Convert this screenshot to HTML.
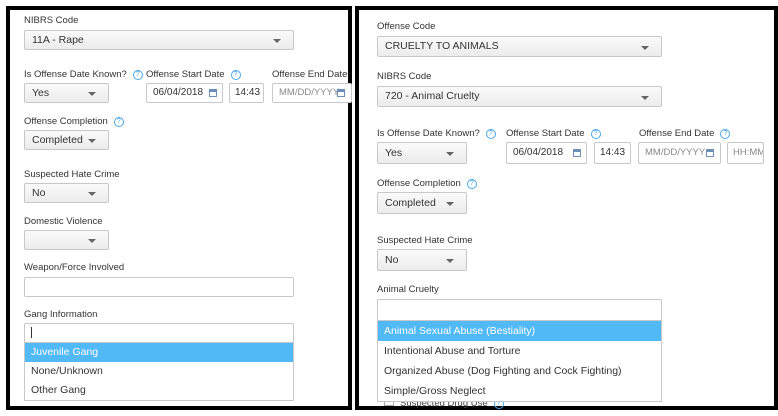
<!DOCTYPE html>
<html><head><style>
*{box-sizing:border-box;margin:0;padding:0}
body{width:778px;height:416px;background:#fff;position:relative;overflow:hidden;font-family:"Liberation Sans",sans-serif;color:#333}
.panel{position:absolute;border:4px solid #000;background:#fff;overflow:hidden}
.a{position:absolute}
.lb{position:absolute;font-size:9.5px;line-height:12px;color:#333;white-space:nowrap}
.sel{position:absolute;border:1px solid #c8c8c8;border-radius:2px;background:linear-gradient(#fafafa,#ececec);font-size:10.5px;line-height:18px;padding-left:7px;color:#333;white-space:nowrap}
.sel:after{content:"";position:absolute;right:12px;top:50%;margin-top:-1px;border-left:4px solid transparent;border-right:4px solid transparent;border-top:4px solid #666}
.inp{position:absolute;border:1px solid #c8c8c8;border-radius:2px;background:#fff;font-size:10px;line-height:18px;padding-left:6px;white-space:nowrap;overflow:hidden}
.cal{position:absolute;width:8px;height:8px;border:1px solid #6b8fb8;border-top:3px solid #6b8fb8;top:5px}
.q{display:inline-block;width:10px;height:10px;border:1px solid #4aa8e8;border-radius:50%;color:#4aa8e8;font-size:7px;line-height:8px;text-align:center;margin-left:6px;vertical-align:top;margin-top:1px}
.dd{position:absolute;border:1px solid #c8c8c8;background:#fff;font-size:10.5px}
.dd div{height:19px;line-height:19px;padding-left:6px;white-space:nowrap}
.dd .h{background:#52b9f7;color:#fff}
</style></head><body>
<div class="panel" style="left:6px;top:6px;width:346px;height:404px"></div>
<div class="panel" style="left:355px;top:6px;width:423px;height:404px"></div>

<!-- left -->
<div class="lb" style="left:24px;top:15px">NIBRS Code</div>
<div class="sel" style="left:24px;top:30px;width:270px;height:20px">11A - Rape</div>
<div class="lb" style="left:24px;top:69px">Is Offense Date Known?<span class="q">?</span></div>
<div class="lb" style="left:146px;top:69px">Offense Start Date<span class="q">?</span></div>
<div class="lb" style="left:272px;top:69px">Offense End Date</div>
<div class="sel" style="left:24px;top:83px;width:85px;height:20px">Yes</div>
<div class="inp" style="left:146px;top:83px;width:77px;height:20px">06/04/2018<span class="cal" style="left:62px"></span></div>
<div class="inp" style="left:229px;top:83px;width:35px;height:20px;padding-left:5px">14:43</div>
<div class="inp" style="left:272px;top:83px;width:80px;height:20px;color:#888;font-size:9.5px">MM/DD/YYYY<span class="cal" style="left:64px"></span></div>
<div class="lb" style="left:24px;top:116px">Offense Completion<span class="q">?</span></div>
<div class="sel" style="left:24px;top:130px;width:85px;height:20px">Completed</div>
<div class="lb" style="left:24px;top:169px">Suspected Hate Crime</div>
<div class="sel" style="left:24px;top:183px;width:85px;height:20px">No</div>
<div class="lb" style="left:24px;top:216px">Domestic Violence</div>
<div class="sel" style="left:24px;top:230px;width:85px;height:20px"></div>
<div class="lb" style="left:24px;top:262px">Weapon/Force Involved</div>
<div class="inp" style="left:24px;top:277px;width:270px;height:20px"></div>
<div class="lb" style="left:24px;top:309px">Gang Information</div>
<div class="inp" style="left:24px;top:323px;width:270px;height:20px"><span style="border-left:1px solid #333;display:inline-block;height:11px;vertical-align:middle"></span></div>
<div class="dd" style="left:24px;top:342px;width:270px;height:59px">
<div class="h">Juvenile Gang</div><div>None/Unknown</div><div>Other Gang</div></div>

<!-- right -->
<div class="lb" style="left:377px;top:21px">Offense Code</div>
<div class="sel" style="left:377px;top:36px;width:285px;height:21px;line-height:19px">CRUELTY TO ANIMALS</div>
<div class="lb" style="left:377px;top:71px">NIBRS Code</div>
<div class="sel" style="left:377px;top:86px;width:285px;height:21px;line-height:19px">720 - Animal Cruelty</div>
<div class="lb" style="left:377px;top:128px">Is Offense Date Known?<span class="q">?</span></div>
<div class="lb" style="left:506px;top:128px">Offense Start Date<span class="q">?</span></div>
<div class="lb" style="left:639px;top:128px">Offense End Date<span class="q">?</span></div>
<div class="sel" style="left:377px;top:142px;width:90px;height:22px;line-height:20px">Yes</div>
<div class="inp" style="left:506px;top:142px;width:81px;height:22px;line-height:20px">06/04/2018<span class="cal" style="left:66px;top:6px"></span></div>
<div class="inp" style="left:594px;top:142px;width:37px;height:22px;line-height:20px;padding-left:5px">14:43</div>
<div class="inp" style="left:638px;top:142px;width:83px;height:22px;line-height:20px;color:#888;font-size:9.5px">MM/DD/YYYY<span class="cal" style="left:67px;top:6px"></span></div>
<div class="inp" style="left:727px;top:142px;width:37px;height:22px;line-height:20px;color:#888;font-size:9.5px;padding-left:5px">HH:MM</div>
<div class="lb" style="left:377px;top:178px">Offense Completion<span class="q">?</span></div>
<div class="sel" style="left:377px;top:192px;width:90px;height:22px;line-height:20px">Completed</div>
<div class="lb" style="left:377px;top:235px">Suspected Hate Crime</div>
<div class="sel" style="left:377px;top:249px;width:90px;height:22px;line-height:20px">No</div>
<div class="lb" style="left:377px;top:284px">Animal Cruelty</div>
<div class="inp" style="left:377px;top:299px;width:285px;height:22px"></div>
<div class="lb" style="left:400px;top:398px;color:#444">Suspected Drug Use<span class="q">?</span></div>
<div class="a" style="left:384px;top:398px;width:10px;height:8px;border:1px solid #aaa;border-top:none"></div>
<div class="dd" style="left:377px;top:320px;width:285px;height:82px">
<div class="h" style="height:20px;line-height:20px">Animal Sexual Abuse (Bestiality)</div><div style="height:20px;line-height:20px">Intentional Abuse and Torture</div><div style="height:20px;line-height:20px">Organized Abuse (Dog Fighting and Cock Fighting)</div><div style="height:20px;line-height:20px">Simple/Gross Neglect</div></div>
</body></html>
